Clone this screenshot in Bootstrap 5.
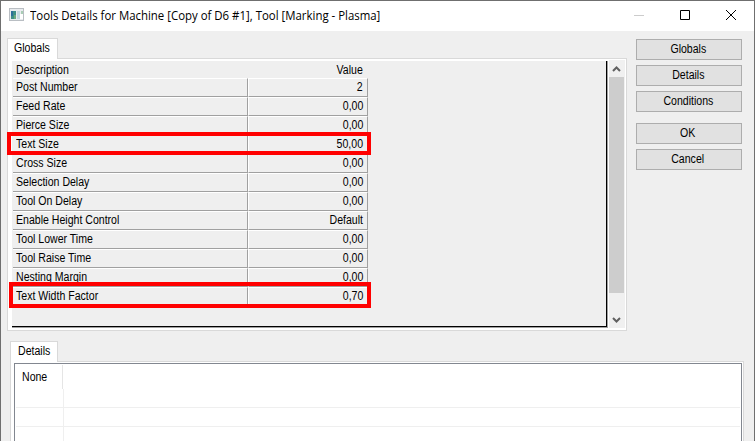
<!DOCTYPE html>
<html lang="en">
<head>
<meta charset="utf-8">
<title>Tools Details</title>
<link href="https://cdn.jsdelivr.net/npm/bootstrap@5.3.0/dist/css/bootstrap.min.css" rel="stylesheet">
<style>
body{width:755px;height:441px;overflow:hidden;background:#efefef;font:12px/16px "Liberation Sans",Arial,sans-serif;color:#000}
.win{width:755px;height:441px;border:1px solid #6f6f6f;border-bottom:0;overflow:hidden}
.titlebar{height:30px;padding-left:8px;background:#fff}
.titlebar .app{margin-bottom:3px}
.caption{font:12px/16px "Open Sans","Noto Sans",sans-serif;margin-left:6px;white-space:nowrap}
.caption span{display:inline-block;transform-origin:0 50%;transform:scaleX(.951)}
.controls{width:138px}
.controls svg{width:46px;height:30px;display:block}
.sx{display:inline-block;transform:scaleX(.88);white-space:nowrap}
.l{transform-origin:0 50%}.r{transform-origin:100% 50%}
.work{height:300px;padding:7px 0 0 6px}
.left-pane{width:620px}
.tab-label{position:relative;z-index:1;background:#fff;border:1px solid #d9d9d9;border-bottom:0;height:21px;margin-bottom:-1px;padding-left:6px;line-height:19px}
.tab-g{width:51px}.tab-d{width:48px;padding-left:7px}
.pane{background:#fff;border:1px solid #d9d9d9}
.pane-g{height:273px;padding:1px 0 2px 4px}
.gridbox{width:596px;height:267px;margin-top:1px;background:#efefef;border-right:1px solid #a0a0a0;border-bottom:1px solid #a0a0a0}
.gridin{height:266px;border-right:1px solid #000;border-bottom:1px solid #000}
.ghead{height:17px;width:356px;padding:0 5px 0 4px;line-height:18px}
.grow{height:19px;width:355px;margin-left:1px;line-height:17px}
.c1,.c2{border-top:1px solid #fff;border-bottom:1px solid #a0a0a0;border-right:1px solid #a0a0a0;height:19px}
.c1{width:235px;padding-left:3px}.c2{width:120px;border-left:1px solid #fff;text-align:right;padding-right:4px}
.grow:last-child .c1,.grow:last-child .c2{border-bottom:0}
.sbar{width:16px;height:268px;background:#f0f0f0;margin-left:1px}
.sbar svg{display:block;width:15px;height:17px}
.thumb{width:15px;height:216px;background:#cdcdcd}
.btns{margin:1px 0 0 9px;width:106px;gap:5px}
.wbtn{height:21px;width:106px;padding:0 2px 0 0;border:1px solid #adadad;border-radius:0;background:#e1e1e1;font-size:12px;line-height:19px;color:#000}
.wok{margin-top:6px}
.low{margin:10px 0 0 9px;width:734px}
.pane-d{height:110px;padding:1px 1px 0 3px}
.list{height:108px;border:1px solid #828790;padding:1px}
.lhead{height:24px;width:47px;border-right:1px solid #e5e5e5;padding-left:6px;line-height:24px}
.lrow{height:19px;border-bottom:1px solid #efefef}
.lrow div{width:48px;height:19px;border-right:1px solid #efefef}
.hilite{position:absolute;border:4px solid #f00;left:7px;top:132px;width:364px;height:23px;z-index:3}
.hilite.two{left:9px;top:282px;width:362px;height:26px}
</style>
<script src="https://cdn.jsdelivr.net/npm/bootstrap@5.3.0/dist/js/bootstrap.bundle.min.js"></script>
</head>
<body class="position-relative">
<div class="win">
  <header class="titlebar d-flex align-items-center">
    <svg class="app" width="15" height="13" viewBox="0 0 15 13" shape-rendering="crispEdges">
      <path fill="#b9bec3" d="M0 0h15v13H0z"/><path fill="#e9ecef" d="M1 1h13v11H1z"/>
      <path fill="#3f8f86" d="M2 3h5v8H2z"/><path fill="#2d6f9a" d="M2 3h2v5H2z"/><path fill="#6eab7f" d="M5 7h2v4H5z"/>
      <path fill="#c5d8df" d="M8 3h3v8H8z"/><path fill="#fff" d="M11 6h3v5h-3z"/><path fill="#a9cdb5" d="M12 3h2v3h-2z"/>
    </svg>
    <div class="caption flex-grow-1"><span>Tools Details for Machine [Copy of D6 #1], Tool [Marking - Plasma]</span></div>
    <div class="controls d-flex flex-shrink-0">
      <svg viewBox="0 0 46 30"><path d="M18 14.5h10" stroke="#ccc"/></svg>
      <svg viewBox="0 0 46 30"><path d="M18.500 9.500h9v9h-9z" fill="none" stroke="#000"/></svg>
      <svg viewBox="0 0 46 30"><path d="M18 9l10 10M28 9L18 19" stroke="#000" fill="none"/></svg>
    </div>
  </header>
  <main>
    <div class="work d-flex">
      <section class="left-pane">
        <div class="tab-label tab-g"><span class="sx l">Globals</span></div>
        <div class="pane pane-g d-flex">
          <div class="gridbox"><div class="gridin">
            <div class="ghead d-flex justify-content-between"><span class="sx l">Description</span><span class="sx r">Value</span></div>
            <div class="rows">
            <div class="grow d-flex"><div class="c1"><span class="sx l">Post Number</span></div><div class="c2"><span class="sx r">2</span></div></div>
            <div class="grow d-flex"><div class="c1"><span class="sx l">Feed Rate</span></div><div class="c2"><span class="sx r">0,00</span></div></div>
            <div class="grow d-flex"><div class="c1"><span class="sx l">Pierce Size</span></div><div class="c2"><span class="sx r">0,00</span></div></div>
            <div class="grow d-flex"><div class="c1"><span class="sx l">Text Size</span></div><div class="c2"><span class="sx r">50,00</span></div></div>
            <div class="grow d-flex"><div class="c1"><span class="sx l">Cross Size</span></div><div class="c2"><span class="sx r">0,00</span></div></div>
            <div class="grow d-flex"><div class="c1"><span class="sx l">Selection Delay</span></div><div class="c2"><span class="sx r">0,00</span></div></div>
            <div class="grow d-flex"><div class="c1"><span class="sx l">Tool On Delay</span></div><div class="c2"><span class="sx r">0,00</span></div></div>
            <div class="grow d-flex"><div class="c1"><span class="sx l">Enable Height Control</span></div><div class="c2"><span class="sx r">Default</span></div></div>
            <div class="grow d-flex"><div class="c1"><span class="sx l">Tool Lower Time</span></div><div class="c2"><span class="sx r">0,00</span></div></div>
            <div class="grow d-flex"><div class="c1"><span class="sx l">Tool Raise Time</span></div><div class="c2"><span class="sx r">0,00</span></div></div>
            <div class="grow d-flex"><div class="c1"><span class="sx l">Nesting Margin</span></div><div class="c2"><span class="sx r">0,00</span></div></div>
            <div class="grow d-flex"><div class="c1"><span class="sx l">Text Width Factor</span></div><div class="c2"><span class="sx r">0,70</span></div></div>
            </div>
          </div></div>
          <div class="sbar">
            <svg viewBox="0 0 15 17"><path d="M4 11l3.500-3.500L11 11" fill="none" stroke="#606060" stroke-width="2"/></svg>
            <div class="thumb"></div>
            <svg class="mt-3" viewBox="0 0 15 17"><path d="M4 9l3.500 3.500L11 9" fill="none" stroke="#606060" stroke-width="2"/></svg>
          </div>
        </div>
      </section>
      <div class="btns d-flex flex-column">
        <button class="btn wbtn"><span class="sx">Globals</span></button>
        <button class="btn wbtn"><span class="sx">Details</span></button>
        <button class="btn wbtn"><span class="sx">Conditions</span></button>
        <button class="btn wbtn wok"><span class="sx">OK</span></button>
        <button class="btn wbtn"><span class="sx">Cancel</span></button>
      </div>
    </div>
    <section class="low">
      <div class="tab-label tab-d"><span class="sx l">Details</span></div>
      <div class="pane pane-d"><div class="list">
        <div class="lhead"><span class="sx l">None</span></div>
        <div class="lrow"><div></div></div><div class="lrow"><div></div></div><div class="lrow"><div></div></div>
      </div></div>
    </section>
  </main>
</div>
<div class="hilite"></div>
<div class="hilite two"></div>
</body>
</html>
